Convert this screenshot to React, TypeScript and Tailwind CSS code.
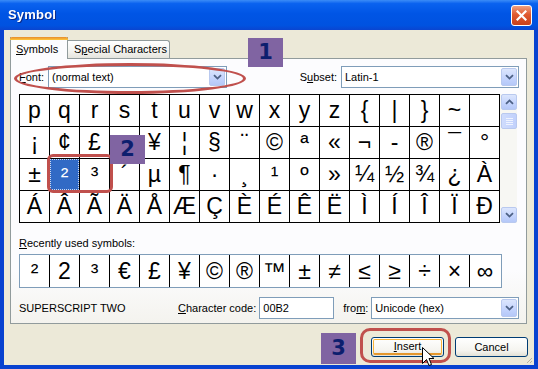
import React from "react";

const rows: string[][] = [
  ["p", "q", "r", "s", "t", "u", "v", "w", "x", "y", "z", "{", "|", "}", "~", ""],
  ["¡", "¢", "£", "¤", "¥", "¦", "§", "¨", "©", "ª", "«", "¬", "-", "®", "¯", "°"],
  ["±", "²", "³", "´", "µ", "¶", "·", "¸", "¹", "º", "»", "¼", "½", "¾", "¿", "À"],
  ["Á", "Â", "Ã", "Ä", "Å", "Æ", "Ç", "È", "É", "Ê", "Ë", "Ì", "Í", "Î", "Ï", "Ð"],
];

const recent = ["²", "2", "³", "€", "£", "¥", "©", "®", "™", "±", "≠", "≤", "≥", "÷", "×", "∞"];

function Chevron({ up = false }: { up?: boolean }) {
  return (
    <svg width="9" height="6" viewBox="0 0 9 6" className={up ? "rotate-180" : ""}>
      <path d="M1 1.2 L4.5 4.6 L8 1.2" fill="none" stroke="#4d6185" strokeWidth="1.8" />
    </svg>
  );
}

function DropButton() {
  return (
    <div className="w-[16px] h-[18px] rounded-[2px] border border-[#b9c9ef] bg-[linear-gradient(180deg,#dce6fd_0%,#c3d3fd_60%,#b5c8f8_100%)] flex items-center justify-center">
      <Chevron />
    </div>
  );
}

function Select({ value, className }: { value: string; className: string }) {
  return (
    <div className={`h-[22px] border border-[#7f9db9] bg-white flex items-center pl-[3px] pr-[1px] ${className}`}>
      <span className="flex-1 text-[#000]">{value}</span>
      <DropButton />
    </div>
  );
}

function U({ children }: { children: React.ReactNode }) {
  return <span className="underline underline-offset-[1px]">{children}</span>;
}

function Badge({ n, className }: { n: string; className: string }) {
  return (
    <div
      className={`absolute bg-[#8064a2] text-[#0d1e6e] font-bold text-[21px] flex items-center justify-center font-['DejaVu_Sans',sans-serif] ${className}`}
    >
      {n}
    </div>
  );
}

export default function App() {
  return (
    <div className="relative w-[538px] h-[369px] overflow-hidden bg-[#0842d0] font-['Liberation_Sans',Arial,sans-serif] text-[11px] text-black">
      {/* title bar */}
      <div className="h-[30px] flex items-center justify-between pl-[8px] pr-[6px] bg-[linear-gradient(180deg,#3b8cf7_0%,#0a62ef_12%,#0055e5_45%,#0052e0_85%,#0a45d0_100%)]">
        <span className="text-white font-bold text-[13px] tracking-[0.2px] drop-shadow-[1px_1px_0_#0a2a8a]">Symbol</span>
        <div className="w-[21px] h-[21px] rounded-[3px] border border-white bg-[linear-gradient(180deg,#f0a080_0%,#e05a30_45%,#c8401c_100%)] flex items-center justify-center">
          <svg width="11" height="11" viewBox="0 0 11 11">
            <path d="M1.5 1.5 L9.5 9.5 M9.5 1.5 L1.5 9.5" stroke="white" strokeWidth="2.2" strokeLinecap="square" />
          </svg>
        </div>
      </div>

      {/* body */}
      <div className="mx-[4px] h-[335px] bg-[#ece9d8] pl-[6px] pr-[6px] pt-[7px]">
        {/* tabs */}
        <div className="flex items-end h-[21px]">
          <div className="relative z-10 w-[58px] h-[22px] -mb-[1px] bg-[#fcfcfe] border-x border-[#919b9c] flex flex-col">
            <div className="h-[3px] bg-[linear-gradient(180deg,#e68b2c_0%,#ffc73c_100%)] rounded-t-[2px] -mx-[1px]" />
            <div className="flex-1 flex items-center pl-[5px]">
              <U>S</U>ymbols
            </div>
          </div>
          <div className="w-[102px] h-[18px] bg-[linear-gradient(180deg,#ffffff_0%,#f3f3ef_60%,#e5e4dd_100%)] border border-b-0 border-l-0 border-[#919b9c] rounded-tr-[3px] flex items-center pl-[6px]">
            S<U>p</U>ecial Characters
          </div>
        </div>

        {/* panel */}
        <div className="w-[517px] border border-[#919b9c] bg-[linear-gradient(180deg,#fcfcfe_0%,#fcfcfe_80%,#f4f3ee_100%)] pl-[8px] pr-[7px] pt-[7px] pb-[4px]">
          {/* font row */}
          <div className="flex items-center h-[22px]">
            <span className="w-[29px]">
              <U>F</U>ont:
            </span>
            <Select value="(normal text)" className="w-[179px]" />
            <span className="ml-auto mr-[4px]">
              S<U>u</U>bset:
            </span>
            <Select value="Latin-1" className="w-[178px]" />
          </div>

          {/* symbol grid */}
          <div className="mt-[6px] flex">
            <div className="border-l border-t border-black grid grid-cols-[repeat(16,30px)]">
              {rows.map((r, ri) =>
                r.map((c, ci) => {
                  const sel = ri === 2 && ci === 1;
                  return (
                    <div
                      key={`${ri}-${ci}`}
                      className="w-[30px] h-[32px] border-r border-b border-black bg-white"
                    >
                      {sel ? (
                        <div className="w-full h-full bg-[#316ac5] border border-dotted border-[#ced9f0] text-white text-[23px] leading-[30px] text-center">
                          {c}
                        </div>
                      ) : (
                        <div className="w-full h-full text-[23px] leading-[31px] text-center">{c}</div>
                      )}
                    </div>
                  );
                })
              )}
            </div>
            <div className="w-[17px] h-[129px] bg-[#f7f7f3] flex flex-col items-end pl-[1px]">
              <div className="w-[16px] h-[16px] rounded-[2px] border border-[#b9c9ef] bg-[linear-gradient(180deg,#dce6fd_0%,#c3d3fd_60%,#b5c8f8_100%)] flex items-center justify-center">
                <Chevron up />
              </div>
              <div className="mt-[3px] w-[16px] h-[16px] rounded-[2px] border border-[#b9c9ef] bg-[linear-gradient(90deg,#cfdcfd_0%,#c1d1fc_100%)] flex flex-col items-center justify-center gap-[1px]">
                <div className="w-[7px] h-[1px] bg-[#eef3ff]" />
                <div className="w-[7px] h-[1px] bg-[#eef3ff]" />
                <div className="w-[7px] h-[1px] bg-[#eef3ff]" />
                <div className="w-[7px] h-[1px] bg-[#eef3ff]" />
              </div>
              <div className="flex-1" />
              <div className="w-[16px] h-[16px] rounded-[2px] border border-[#b9c9ef] bg-[linear-gradient(180deg,#dce6fd_0%,#c3d3fd_60%,#b5c8f8_100%)] flex items-center justify-center">
                <Chevron />
              </div>
            </div>
          </div>

          {/* recently used */}
          <div className="mt-[14px] h-[13px] leading-[13px]">
            <U>R</U>ecently used symbols:
          </div>
          <div className="mt-[4px] w-[483px] border border-[#7f9db9] bg-white flex">
            {recent.map((c, i) => (
              <div
                key={i}
                className={`w-[30px] h-[32px] text-[23px] leading-[32px] text-center ${i < 15 ? "border-r border-black" : ""}`}
              >
                {c}
              </div>
            ))}
          </div>

          {/* bottom row */}
          <div className="mt-[9px] flex items-center h-[22px]">
            <span className="w-[159px]">SUPERSCRIPT TWO</span>
            <span>
              <U>C</U>haracter code:
            </span>
            <div className="ml-[3px] w-[75px] h-[22px] border border-[#7f9db9] bg-white flex items-center pl-[3px]">
              00B2
            </div>
            <span className="ml-[9px]">
              fro<U>m</U>:
            </span>
            <Select value="Unicode (hex)" className="ml-[3px] flex-1" />
          </div>
        </div>

        {/* buttons */}
        <div className="mt-[13px] flex justify-end gap-[11px]">
          <div className="w-[73px] h-[20px] rounded-[3px] border border-[#003c74] bg-[linear-gradient(180deg,#ffffff_0%,#f5f4ef_70%,#e3e1d6_100%)] p-[1px]">
            <div className="w-full h-full rounded-[2px] border border-[#f8b33a] border-b-2 border-b-[#e5972c] flex items-center justify-center">
              <U>I</U>nsert
            </div>
          </div>
          <div className="w-[73px] h-[20px] rounded-[3px] border border-[#003c74] bg-[linear-gradient(180deg,#ffffff_0%,#f5f4ef_70%,#e3e1d6_100%)] flex items-center justify-center">
            Cancel
          </div>
        </div>
      </div>

      {/* resize grip */}
      <svg className="absolute left-[526px] top-[357px]" width="7" height="7" viewBox="0 0 7 7">
        <path d="M6 1 L1 6 M6 4 L4 6" stroke="#b5b2a3" strokeWidth="1" />
      </svg>

      {/* annotations */}
      <div className="absolute left-[14px] top-[63px] w-[232px] h-[31px] rounded-[50%] border-[3px] border-[#c0504d]" />
      <div className="absolute left-[47px] top-[154px] w-[66px] h-[39px] rounded-[6px] border-[3px] border-[#c0504d]" />
      <div className="absolute left-[360px] top-[328px] w-[91px] h-[35px] rounded-[10px] border-[3px] border-[#c0504d]" />

      <Badge n="1" className="left-[248px] top-[38px] w-[35px] h-[29px]" />
      <Badge n="2" className="left-[110px] top-[135px] w-[35px] h-[29px]" />
      <Badge n="3" className="left-[321px] top-[333px] w-[35px] h-[31px]" />

      {/* mouse cursor */}
      <svg className="absolute left-[422px] top-[347px]" width="13" height="21" viewBox="0 0 13 21">
        <path
          d="M0.5 0.5 L0.5 16.5 L4.5 12.5 L7 18.5 L9.5 17.5 L7 11.5 L12 11.5 Z"
          fill="white"
          stroke="black"
          strokeWidth="1"
          strokeLinejoin="miter"
        />
      </svg>
    </div>
  );
}
